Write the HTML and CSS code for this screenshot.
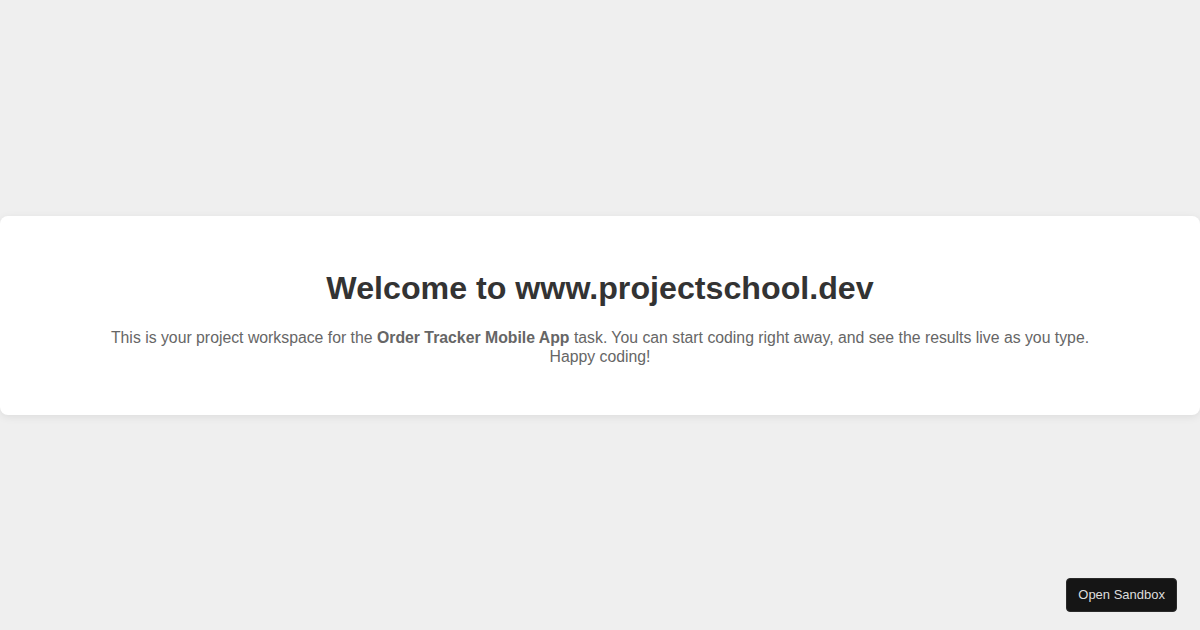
FILE: index.html
```html
<!DOCTYPE html>
<html lang="en">
<head>
    <meta charset="UTF-8">
    <meta name="viewport" content="width=device-width, initial-scale=1.0">
    <title>Project School</title>
    <link rel="stylesheet" href="styles.css">
</head>
<body>
    <div class="welcome">
        <h1>Welcome to www.projectschool.dev</h1>
        <p>This is your project workspace for the <strong>Order Tracker Mobile App</strong> task. You can start coding right away, and see the results live as you type. Happy coding!</p>
    </div>

    <button class="sandbox-btn">Open Sandbox</button>
</body>
</html>
```

FILE: styles.css
```css
html, body {
    height: 100%;
}
body {
    margin: 0;
    background: #efefef;
    font-family: "Liberation Sans", Arial, sans-serif;
    display: flex;
    align-items: center;
    justify-content: center;
}
.welcome {
    width: 100%;
    box-sizing: border-box;
    background: #fff;
    border-radius: 8px;
    box-shadow: 0 2px 8px rgba(0, 0, 0, 0.08);
    padding: 33px 32px 32px;
    text-align: center;
}
.welcome h1 {
    margin: 21px 0;
    font-size: 32.2px;
    color: #333;
}
.welcome p {
    max-width: 1000px;
    margin: 0 auto 17px;
    font-size: 15.8px;
    line-height: 19px;
    color: #666;
}
.sandbox-btn {
    position: fixed;
    right: 23px;
    bottom: 18px;
    padding: 8px 11px 9px;
    background: #151515;
    color: #dddddd;
    border: 1px solid #2a2a2a;
    border-radius: 4px;
    font-family: "Liberation Sans", Arial, sans-serif;
    font-size: 13px;
    cursor: pointer;
}
```
